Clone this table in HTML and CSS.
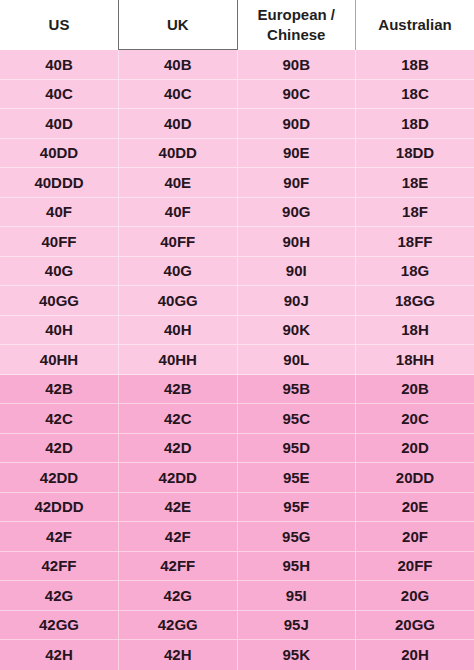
FILE: index.html
```html
<!DOCTYPE html>
<html>
<head>
<meta charset="utf-8">
<link rel="stylesheet" href="styles.css">
</head>
<body>
<table class="chart">
<thead>
<tr>
<th>US</th>
<th class="uk">UK</th>
<th>European /<br>Chinese</th>
<th class="au">Australian</th>
</tr>
</thead>
<tbody>
<tr class="b40"><td>40B</td><td>40B</td><td>90B</td><td>18B</td></tr>
<tr class="b40"><td>40C</td><td>40C</td><td>90C</td><td>18C</td></tr>
<tr class="b40"><td>40D</td><td>40D</td><td>90D</td><td>18D</td></tr>
<tr class="b40"><td>40DD</td><td>40DD</td><td>90E</td><td>18DD</td></tr>
<tr class="b40"><td>40DDD</td><td>40E</td><td>90F</td><td>18E</td></tr>
<tr class="b40"><td>40F</td><td>40F</td><td>90G</td><td>18F</td></tr>
<tr class="b40"><td>40FF</td><td>40FF</td><td>90H</td><td>18FF</td></tr>
<tr class="b40"><td>40G</td><td>40G</td><td>90I</td><td>18G</td></tr>
<tr class="b40"><td>40GG</td><td>40GG</td><td>90J</td><td>18GG</td></tr>
<tr class="b40"><td>40H</td><td>40H</td><td>90K</td><td>18H</td></tr>
<tr class="b40"><td>40HH</td><td>40HH</td><td>90L</td><td>18HH</td></tr>
<tr class="b42"><td>42B</td><td>42B</td><td>95B</td><td>20B</td></tr>
<tr class="b42"><td>42C</td><td>42C</td><td>95C</td><td>20C</td></tr>
<tr class="b42"><td>42D</td><td>42D</td><td>95D</td><td>20D</td></tr>
<tr class="b42"><td>42DD</td><td>42DD</td><td>95E</td><td>20DD</td></tr>
<tr class="b42"><td>42DDD</td><td>42E</td><td>95F</td><td>20E</td></tr>
<tr class="b42"><td>42F</td><td>42F</td><td>95G</td><td>20F</td></tr>
<tr class="b42"><td>42FF</td><td>42FF</td><td>95H</td><td>20FF</td></tr>
<tr class="b42"><td>42G</td><td>42G</td><td>95I</td><td>20G</td></tr>
<tr class="b42"><td>42GG</td><td>42GG</td><td>95J</td><td>20GG</td></tr>
<tr class="b42 last"><td>42H</td><td>42H</td><td>95K</td><td>20H</td></tr>
</tbody>
</table>
</body>
</html>
```
FILE: styles.css
```css
html, body {
  margin: 0;
  padding: 0;
  background: #ffffff;
}
body {
  width: 474px;
  height: 670px;
  overflow: hidden;
  font-family: "Liberation Sans", Arial, sans-serif;
}
.chart {
  width: 474px;
  table-layout: fixed;
  border-collapse: collapse;
  border-spacing: 0;
}
.chart th {
  height: 48px;
  padding: 1px 0 0 0;
  font-size: 15px;
  font-weight: bold;
  line-height: 20px;
  color: #1f1f1f;
  background: #ffffff;
  text-align: center;
  vertical-align: middle;
}
.chart th.uk {
  border-left: 1px solid #6e6e6e;
  border-right: 1px solid #6e6e6e;
  border-bottom: 1px solid #6e6e6e;
}
.chart th.au {
  border-left: 1px solid #a8a8a8;
}
.chart td {
  height: 28.5px;
  padding: 0;
  font-size: 15px;
  font-weight: bold;
  color: #26141e;
  text-align: center;
  vertical-align: middle;
  border: 1px solid #fde3ef;
}
.chart td:first-child {
  border-left: none;
}
.chart td:last-child {
  border-right: none;
}
.chart tbody tr:first-child td {
  border-top: none;
}
.b40 td {
  background: #fcc9e2;
}
.b42 td {
  background: #f9acd1;
  border-color: #fcd3e6;
}
.chart tr.last td {
  height: 28.5px;
  padding-bottom: 4px;
  border-bottom: none;
}
```
